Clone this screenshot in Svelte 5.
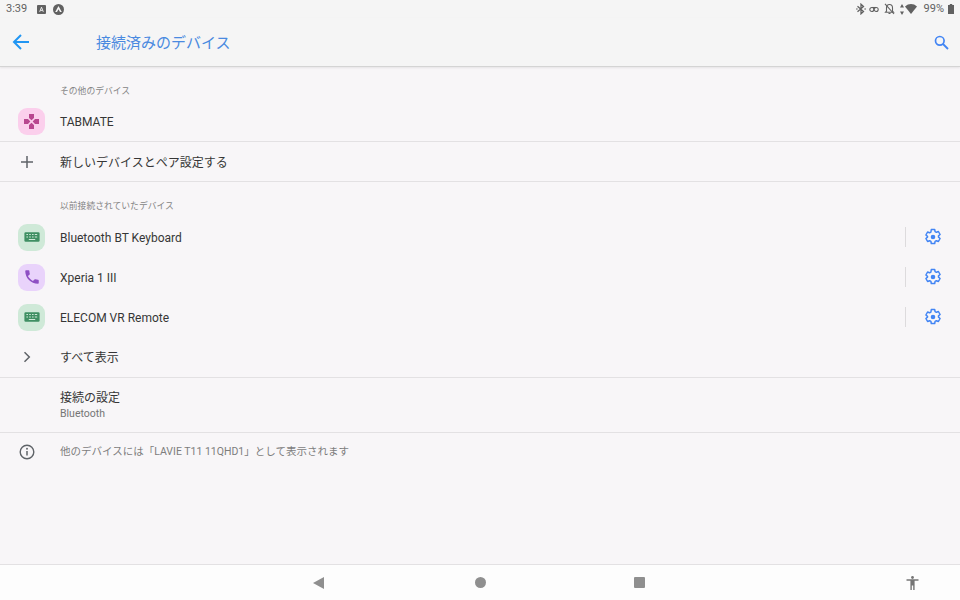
<script>
	const keyboard = "M4 6h16a1.5 1.5 0 0 1 1.5 1.5v9A1.5 1.5 0 0 1 20 18H4a1.5 1.5 0 0 1-1.5-1.5v-9A1.5 1.5 0 0 1 4 6z";
	const phone = "M6.6 10.8c1.4 2.8 3.8 5.1 6.6 6.6l2.2-2.2c.3-.3.7-.4 1-.2 1.1.4 2.3.6 3.6.6.6 0 1 .4 1 1V20c0 .6-.4 1-1 1C10.6 21 3 13.4 3 4c0-.6.4-1 1-1h3.500c.6 0 1 .4 1 1 0 1.300.2 2.500.6 3.600.1.300 0 .7-.2 1z";

	const saved = [
		{ name: "Bluetooth BT Keyboard", kind: "kb" },
		{ name: "Xperia 1 III", kind: "phone" },
		{ name: "ELECOM VR Remote", kind: "kb" }
	];
</script>

<div class="screen">
	<div class="status">
		<span class="time">3:39</span>
		<svg class="st a" width="9" height="9" viewBox="0 0 10 10"><rect width="10" height="10" rx="1" fill="#616161" /><path d="M3 7.600 5 2.400 7 7.600M3.800 6h2.400" fill="none" stroke="#f5f5f5" stroke-width="1" /></svg>
		<svg class="st b" width="11" height="11" viewBox="0 0 11 11"><circle cx="5.500" cy="5.500" r="5.500" fill="#616161" /><path d="M5.500 2 8.800 8H7L5.500 5.200 4 8H2.200z" fill="#f5f5f5" /></svg>
		<span class="grow"></span>
		<svg width="10" height="12" viewBox="0 0 10 12"><path d="M1.500 3.200 7.500 8.500 5 10.800V1.200L7.500 3.500 1.500 8.800" fill="none" stroke="#616161" stroke-width="1.300" /><circle cx="0.900" cy="6" r=".8" fill="#616161" /><circle cx="9.100" cy="6" r=".8" fill="#616161" /></svg>
		<svg class="gap-key" width="10" height="7" viewBox="0 0 11 8"><circle cx="3" cy="4" r="2.300" fill="none" stroke="#616161" stroke-width="1.200" /><circle cx="8" cy="4" r="2.300" fill="none" stroke="#616161" stroke-width="1.200" /><path d="M3 1.700h5" stroke="#616161" stroke-width="1.200" /></svg>
		<svg class="gap-bell" width="11" height="12" viewBox="0 0 11 12"><path d="M5.500 1.500c-2 0-3 1.500-3 3.300V8L1.500 9.200h8L8.500 8V4.800c0-1.800-1-3.300-3-3.300zM4.500 10.500h2" fill="none" stroke="#616161" stroke-width="1.100" /><path d="M1 .8 10 11" stroke="#616161" stroke-width="1.100" /></svg>
		<svg class="gap-arrows" width="4" height="11" viewBox="0 0 4 11"><path d="M2 0 4 3.500H0zM2 11 0 7.500h4z" fill="#616161" /></svg>
		<svg class="gap-wifi" width="12" height="10" viewBox="0 0 12 10"><path d="M0 2.500C3.500-.8 8.500-.8 12 2.500L6 10z" fill="#616161" /></svg>
		<span class="pct">99%</span>
		<svg class="gap-batt" width="6" height="10" viewBox="0 0 6 10"><path d="M1.800 0h2.400v1H6v9H0V1h1.800z" fill="#616161" /></svg>
	</div>

	<header class="toolbar">
		<svg class="back" width="18" height="18" viewBox="0 0 18 18"><path d="M17 9H2.500M9 2 2 9l7 7" fill="none" stroke="#2196f3" stroke-width="2" /></svg>
		<h1>接続済みのデバイス</h1>
		<span class="grow"></span>
		<svg class="search" width="15" height="15" viewBox="0 0 15 15"><circle cx="5.800" cy="5.800" r="4.300" fill="none" stroke="#4285f4" stroke-width="1.700" /><path d="M9 9l5 5" stroke="#4285f4" stroke-width="1.800" /></svg>
	</header>

	<main>
		<div class="section first">その他のデバイス</div>
		<div class="row">
			<span class="lead">
				<span class="tile pink">
					<svg width="15" height="15" viewBox="0 0 15 15" fill="#b8478f"><path d="M5 0h5v4L7.500 6.300 5 4zM5 15h5v-4L7.500 8.700 5 11zM0 5v5h4L6.300 7.500 4 5zM15 5v5h-4L8.700 7.500 11 5z" /></svg>
				</span>
			</span>
			<span class="label">TABMATE</span>
		</div>
		<div class="line"></div>
		<div class="row short">
			<span class="lead plain">
				<svg width="14" height="14" viewBox="0 0 14 14"><path d="M7 1v12M1 7h12" stroke="#5f6368" stroke-width="1.500" /></svg>
			</span>
			<span class="label">新しいデバイスとペア設定する</span>
		</div>
		<div class="line"></div>

		<div class="section">以前接続されていたデバイス</div>
		{#each saved as d}
			<div class="row">
				<span class="lead">
					{#if d.kind === "kb"}
						<span class="tile green">
							<svg width="16" height="16" viewBox="2 3 20 18">
								<path d={keyboard} fill="#3f8f63" />
								<path d="M5 9h2M8.500 9h2M12 9h2M15.500 9h3M5 12h2M8.500 12h2M12 12h2M15.500 12h3M8 15.200h8" stroke="#cfe9d8" stroke-width="1.300" />
							</svg>
						</span>
					{:else}
						<span class="tile purple">
							<svg width="18" height="18" viewBox="0 0 24 24"><path d={phone} fill="#8e4fc4" /></svg>
						</span>
					{/if}
				</span>
				<span class="label">{d.name}</span>
				<span class="grow"></span>
				<span class="sep"></span>
				<svg class="gear" width="18" height="18" viewBox="0 0 18 18">
					<path d="M7.300 1.500h3.400l.4 2.100 1.300.7 2-.8 1.700 3-1.600 1.300v1.400l1.600 1.300-1.700 3-2-.8-1.300.7-.4 2.100H7.300l-.4-2.100-1.300-.7-2 .8-1.700-3 1.600-1.300V8.300L1.900 7l1.700-3 2 .8 1.300-.7z" fill="none" stroke="#4285f4" stroke-width="1.500" stroke-linejoin="round" />
					<circle cx="9" cy="9" r="2.300" fill="#4285f4" />
				</svg>
			</div>
		{/each}
		<div class="row">
			<span class="lead plain">
				<svg width="8" height="12" viewBox="0 0 8 12"><path d="M1.500 1.200 6.300 6 1.500 10.800" fill="none" stroke="#5f6368" stroke-width="1.500" /></svg>
			</span>
			<span class="label">すべて表示</span>
		</div>
		<div class="line"></div>
		<div class="row two">
			<span class="lead"></span>
			<div class="stack">
				<span class="label">接続の設定</span>
				<span class="sub">Bluetooth</span>
			</div>
		</div>
		<div class="line"></div>
		<div class="info">
			<span class="lead plain">
				<svg width="16" height="16" viewBox="0 0 16 16"><circle cx="8" cy="8" r="6.800" fill="none" stroke="#5f6368" stroke-width="1.400" /><path d="M8 7v4.500" stroke="#5f6368" stroke-width="1.500" /><circle cx="8" cy="4.800" r=".95" fill="#5f6368" /></svg>
			</span>
			<span class="note">他のデバイスには「LAVIE T11 11QHD1」として表示されます</span>
		</div>
	</main>

	<nav>
		<svg class="nav-back" width="12" height="12" viewBox="0 0 12 12"><path d="M11 0v12L0 6z" fill="#8f8f8f" /></svg>
		<span class="nav-home"></span>
		<span class="nav-recent"></span>
		<svg class="nav-a11y" width="13" height="14" viewBox="0 0 13 14"><circle cx="6.500" cy="1.500" r="1.400" fill="#757575" /><path d="M.5 3.300h12v1.400H8.600V14H7.200V9.500H5.800V14H4.400V4.700H.5z" fill="#757575" /></svg>
	</nav>
</div>

<style>
	:global(body) {
		margin: 0;
	}
	.screen {
		width: 960px;
		height: 600px;
		display: flex;
		flex-direction: column;
		overflow: hidden;
		background: #f8f6f8;
		color: #363636;
		font-family: Roboto, "Noto Sans CJK JP", sans-serif;
	}
	.grow {
		flex: 1;
	}
	.status {
		height: 18px;
		flex: none;
		display: flex;
		align-items: center;
		padding: 0 6px;
		background: #f5f5f5;
		color: #616161;
		font-size: 11px;
		line-height: 14px;
	}
	.time {
		width: 31px;
	}
	.st.b {
		margin-left: 7px;
	}
	.gap-key {
		margin-left: 3px;
	}
	.gap-bell {
		margin-left: 5px;
	}
	.gap-arrows {
		margin-left: 5px;
	}
	.gap-wifi {
		margin-left: 1px;
	}
	.pct {
		margin-left: 7px;
	}
	.gap-batt {
		margin-left: 4px;
	}
	.toolbar {
		height: 48px;
		flex: none;
		display: flex;
		align-items: center;
		background: #f5f5f5;
		border-bottom: 1px solid #d4d4d4;
		box-shadow: 0 1px 2px rgba(0, 0, 0, 0.08);
		padding: 0 11px 0 12px;
		position: relative;
	}
	h1 {
		margin: 2px 0 0 66px;
		font-size: 15px;
		line-height: 20px;
		font-weight: 400;
		color: #4a8ae0;
	}
	main {
		flex: 1;
		display: flex;
		flex-direction: column;
	}
	.section {
		height: 35px;
		box-sizing: border-box;
		padding: 17px 0 0 60px;
		font-size: 8.800px;
		line-height: 14px;
		color: #858585;
	}
	.section.first {
		height: 34px;
	}
	.row {
		height: 40px;
		flex: none;
		display: flex;
		align-items: center;
		font-size: 12px;
		line-height: 16px;
	}
	.row.short {
		height: 39px;
	}
	.row.two {
		height: 54px;
	}
	.row > .label {
		margin-top: 2px;
	}
	.lead {
		width: 60px;
		flex: none;
		display: flex;
		align-items: center;
		padding-left: 18px;
		box-sizing: border-box;
	}
	.lead.plain {
		padding-left: 0;
		justify-content: center;
		width: 54px;
		margin-right: 6px;
	}
	.tile {
		width: 27px;
		height: 27px;
		border-radius: 9px;
		display: flex;
		align-items: center;
		justify-content: center;
	}
	.pink {
		background: #fbcfec;
	}
	.green {
		background: #cfe9d8;
	}
	.purple {
		background: #e9d3fb;
	}
	.line {
		height: 1px;
		flex: none;
		background: #e3e1e3;
	}
	.sep {
		width: 1px;
		height: 20px;
		background: #dddbdd;
	}
	.gear {
		margin: 0 18px;
	}
	.stack {
		display: flex;
		flex-direction: column;
		line-height: 15px;
		margin-top: 2px;
	}
	.sub {
		font-size: 10.500px;
		line-height: 15px;
		color: #757575;
	}
	.info {
		display: flex;
		align-items: flex-start;
		padding-top: 11px;
	}
	.note {
		margin-top: 1px;
		font-size: 10.500px;
		line-height: 14px;
		color: #7d7d7d;
	}
	nav {
		height: 36px;
		flex: none;
		background: #fdfdfd;
		border-top: 1px solid #e3e1e3;
		box-sizing: border-box;
		display: flex;
		align-items: center;
		padding-left: 313px;
	}
	.nav-home {
		width: 11px;
		height: 11px;
		border-radius: 50%;
		background: #8f8f8f;
		margin-left: 150px;
	}
	.nav-recent {
		width: 11px;
		height: 11px;
		background: #8f8f8f;
		margin-left: 148px;
		border-radius: 1px;
	}
	.nav-a11y {
		margin-left: 261px;
	}
</style>
